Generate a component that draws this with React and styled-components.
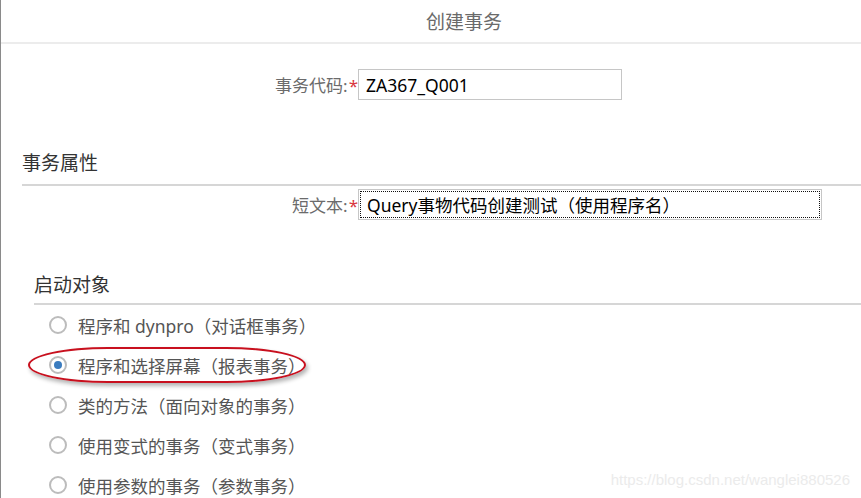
import styled, { createGlobalStyle } from "styled-components";

const GlobalStyle = createGlobalStyle`
  html, body {
    margin: 0;
    padding: 0;
    background: #ffffff;
  }
  body {
    font-family: "Noto Sans", "Noto Sans CJK SC", sans-serif;
  }
`;

const Page = styled.div`
  position: relative;
  height: 498px;
  overflow: hidden;
  border-left: 1px solid #8a8a8a;
  background: #ffffff;
`;

const Header = styled.header`
  height: 42px;
  padding-left: 66px;
  display: flex;
  align-items: center;
  justify-content: center;
  border-bottom: 2px solid #ececec;
  font-size: 19px;
  color: #6a6a6a;
`;

const Field = styled.div`
  display: grid;
  grid-template-columns: 357px auto;
  align-items: center;
  margin-top: ${(p) => p.$top}px;
`;

const Label = styled.label`
  text-align: right;
  font-size: 17px;
  color: #6b6b6b;
  white-space: nowrap;

  span {
    color: #d9363e;
    margin-left: 1px;
  }
`;

const Input = styled.div`
  box-sizing: border-box;
  width: ${(p) => p.$width}px;
  height: 31px;
  border: 1px solid #c6c6c6;
  padding: ${(p) => (p.$focused ? "1px" : "0")};
  font-size: 17.5px;
  color: #000000;
`;

const InputText = styled.div`
  box-sizing: border-box;
  height: 100%;
  display: flex;
  align-items: center;
  padding-left: ${(p) => (p.$focused ? "6px" : "7px")};
  border: ${(p) => (p.$focused ? "1px dotted #111111" : "none")};
  white-space: nowrap;
`;

const Section = styled.h2`
  margin: ${(p) => p.$top}px 0 0 ${(p) => p.$left}px;
  padding-bottom: ${(p) => p.$pad}px;
  line-height: 26px;
  font-size: 19px;
  font-weight: normal;
  color: #333333;
  border-bottom: 2px solid #d6d6d6;
`;

const RadioList = styled.div`
  display: flex;
  flex-direction: column;
`;

const RadioRow = styled.div`
  position: relative;
  height: 40px;
  display: flex;
  align-items: center;
  gap: 11px;
  padding-left: 48px;
  font-size: 17.5px;
  color: #555555;

  ${(p) =>
    p.$marked &&
    `
    &::after {
      content: "";
      position: absolute;
      left: 27px;
      top: 2px;
      width: 278px;
      height: 36px;
      box-sizing: border-box;
      border: 2px solid #c8101e;
      border-radius: 80px / 18px;
      box-shadow: 2px 3px 4px rgba(0, 0, 0, 0.3);
    }
  `}
`;

const Circle = styled.span`
  box-sizing: border-box;
  width: 18px;
  height: 18px;
  border-radius: 50%;
  border: 2px solid #bcbcbc;
  background: #ffffff;
  display: flex;
  align-items: center;
  justify-content: center;

  &::before {
    content: "";
    display: ${(p) => (p.$checked ? "block" : "none")};
    width: 8px;
    height: 8px;
    border-radius: 50%;
    background: #3b7cbf;
  }
`;

const Watermark = styled.div`
  position: absolute;
  right: 11px;
  bottom: 10px;
  font-family: "Liberation Sans", Arial, sans-serif;
  font-size: 15px;
  color: #ebebeb;
`;

const options = [
  "程序和 dynpro（对话框事务）",
  "程序和选择屏幕（报表事务）",
  "类的方法（面向对象的事务）",
  "使用变式的事务（变式事务）",
  "使用参数的事务（参数事务）",
];

export default function App() {
  return (
    <>
      <GlobalStyle />
      <Page>
        <Header>创建事务</Header>

        <Field $top={25}>
          <Label>
            事务代码:<span>*</span>
          </Label>
          <Input $width={264}>
            <InputText>ZA367_Q001</InputText>
          </Input>
        </Field>

        <Section $top={50} $left={21} $pad={8}>
          事务属性
        </Section>

        <Field $top={3}>
          <Label>
            短文本:<span>*</span>
          </Label>
          <Input $width={464} $focused>
            <InputText $focused>Query事物代码创建测试（使用程序名）</InputText>
          </Input>
        </Field>

        <Section $top={52} $left={33} $pad={5}>
          启动对象
        </Section>

        <RadioList>
          {options.map((text, i) => (
            <RadioRow key={text} $marked={i === 1}>
              <Circle $checked={i === 1} />
              {text}
            </RadioRow>
          ))}
        </RadioList>

        <Watermark>https://blog.csdn.net/wanglei880526</Watermark>
      </Page>
    </>
  );
}
